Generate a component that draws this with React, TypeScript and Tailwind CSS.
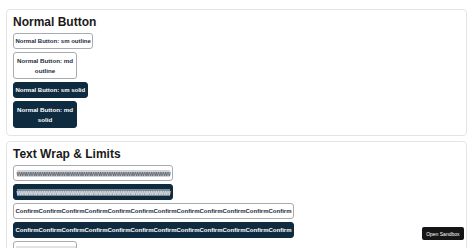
import React from 'react';

type Variant = 'outline' | 'solid';
type Size = 'sm' | 'md';

const LONG_GLYPHS = 'w'.repeat(33);
const CONFIRM = 'Confirm'.repeat(12);

function Btn({ variant, size, children }: { variant: Variant; size: Size; children: React.ReactNode }) {
  const base = 'border rounded-[3px] font-bold text-center';
  const look =
    variant === 'outline'
      ? 'bg-white border-[#a8abb0] text-[#1c2b3a]'
      : 'bg-[#0e2b3f] border-[#0e2b3f] text-white';
  const dims =
    size === 'sm'
      ? 'text-[6px] leading-[10px] px-[1.5px] py-[2px] whitespace-nowrap'
      : 'text-[6.2px] leading-[10px] w-[64px] px-[2px] py-[2.5px]';
  return <button className={`${base} ${look} ${dims}`}>{children}</button>;
}

function Glyphs({ dark }: { dark?: boolean }) {
  return (
    <span
      className={`inline-block mx-[1px] align-middle text-[7px] leading-[7px] tracking-[-0.8px] ${
        dark ? 'bg-[#7f8b97] text-[#dfe3e8]' : 'bg-[#cfd2d6] text-[#5c636c]'
      }`}
    >
      {LONG_GLYPHS}
    </span>
  );
}

function Card({ title, children }: { title: string; children: React.ReactNode }) {
  return (
    <section className="bg-white border border-[#e4e4e4] rounded-[4px] px-[6px] pt-[4px] pb-[7px]">
      <h2 className="text-[12px] leading-[16px] font-bold text-[#1a1a1a] mb-[3px]">{title}</h2>
      <div className="flex flex-col items-start gap-[3px]">{children}</div>
    </section>
  );
}

export default function App() {
  return (
    <div className="min-h-screen bg-white font-['Liberation_Sans',Arial,sans-serif] pl-[6px] pr-[7px] pt-[9px] flex flex-col gap-[5px]">
      <Card title="Normal Button">
        <Btn variant="outline" size="sm">Normal Button: sm outline</Btn>
        <Btn variant="outline" size="md">Normal Button: md outline</Btn>
        <Btn variant="solid" size="sm">Normal Button: sm solid</Btn>
        <Btn variant="solid" size="md">Normal Button: md solid</Btn>
      </Card>

      <Card title="Text Wrap & Limits">
        <Btn variant="outline" size="sm"><Glyphs /></Btn>
        <Btn variant="solid" size="sm"><Glyphs dark /></Btn>
        <Btn variant="outline" size="sm">{CONFIRM}</Btn>
        <Btn variant="solid" size="sm">{CONFIRM}</Btn>
        <Btn variant="outline" size="md">
          <span className="inline-block bg-[#e2e3e5] text-[#b8bbc0] text-[7px] leading-[7px] tracking-[-0.8px] whitespace-nowrap">
            {'w'.repeat(13)}
          </span>
        </Btn>
      </Card>

      <button className="fixed bottom-[8px] right-[10px] bg-[#151515] text-white text-[5px] leading-[6px] px-[4.5px] py-[3.5px] rounded-[2px] font-['Liberation_Sans',Arial,sans-serif]">
        Open Sandbox
      </button>
    </div>
  );
}
